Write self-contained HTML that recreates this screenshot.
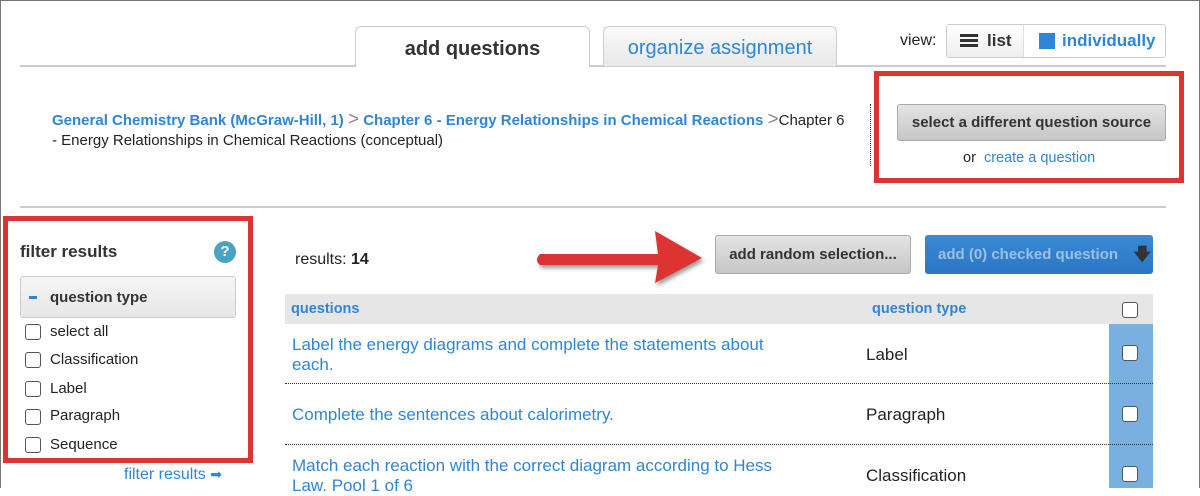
<!DOCTYPE html>
<html><head><style>
*{box-sizing:border-box;margin:0;padding:0}
body{width:1200px;height:488px;overflow:hidden;background:#fff;font-family:"Liberation Sans",sans-serif;position:relative;color:#222}
.a{position:absolute}
.blue{color:#2f86d6}
.cb{position:absolute;width:16px;height:16px;border:1.5px solid #555;border-radius:3px;background:#fff}
.btn{position:absolute;border:1px solid #aaa;border-radius:3px;background:linear-gradient(#e4e4e4,#c6c6c6);font-weight:bold;font-size:15px;color:#333;text-align:center}
</style></head><body>
<div class="a" style="left:0;top:0;width:1200px;height:488px;border:1.5px solid #777;border-bottom:none"></div>
<div class="a" style="left:20px;top:65px;width:1146px;height:2px;background:#ccc"></div>
<div class="a" style="left:355px;top:26px;width:235px;height:41px;border:1px solid #ccc;border-bottom:none;border-radius:6px 6px 0 0;background:#fff;font-size:20px;font-weight:bold;text-align:center;line-height:44px;color:#333">add questions</div>
<div class="a blue" style="left:603px;top:26px;width:234px;height:40px;border:1px solid #ccc;border-bottom:none;border-radius:6px 6px 0 0;background:linear-gradient(#fafafa,#e8e8e8);font-size:20px;text-align:center;line-height:42px">organize assignment</div>
<div class="a" style="left:900px;top:32px;font-size:16px">view:</div>
<div class="a" style="left:946px;top:24px;width:220px;height:34px;border:1px solid #ccc;border-radius:3px;background:#fff"></div>
<div class="a" style="left:947px;top:25px;width:77px;height:32px;background:linear-gradient(#fff,#eee);border-right:1px solid #ddd"></div>
<div class="a" style="left:960px;top:34px;width:18px;height:3px;background:#333;box-shadow:0 5px 0 #333,0 10px 0 #333"></div>
<div class="a" style="left:987px;top:31px;font-size:17px;font-weight:bold;color:#333">list</div>
<div class="a" style="left:1039px;top:33px;width:16px;height:16px;background:#2f86d6"></div>
<div class="a blue" style="left:1062px;top:31px;font-size:17px;font-weight:bold">individually</div>
<div class="a" style="left:52px;top:110px;font-size:15px;line-height:20px;width:830px"><span class="blue" style="font-weight:bold">General Chemistry Bank (McGraw-Hill, 1)</span> <span style="color:#888;font-size:19px">&gt;</span> <span class="blue" style="font-weight:bold">Chapter 6 - Energy Relationships in Chemical Reactions</span> <span style="color:#888;font-size:19px">&gt;</span>Chapter 6<br>- Energy Relationships in Chemical Reactions (conceptual)</div>
<div class="a" style="left:870px;top:104px;height:62px;border-left:1px dotted #333"></div>
<div class="a" style="left:874px;top:71px;width:310px;height:112px;border:5px solid #d33"></div>
<div class="btn" style="left:897px;top:104px;width:269px;height:37px;line-height:36px">select a different question source</div>
<div class="a" style="left:963px;top:150px;font-size:14.5px">or <span class="blue">&nbsp;create a question</span></div>
<div class="a" style="left:20px;top:206px;width:1146px;height:2px;background:#ccc"></div>
<div class="a" style="left:3px;top:216px;width:250px;height:247px;border:5px solid #d33"></div>
<div class="a" style="left:20px;top:242px;font-size:17px;font-weight:bold;color:#333">filter results</div>
<div class="a" style="left:214px;top:241px;width:22px;height:22px;border-radius:50%;background:#4aa3c4;color:#fff;font-weight:bold;font-size:15px;text-align:center;line-height:22px">?</div>
<div class="a" style="left:20px;top:276px;width:216px;height:42px;border:1px solid #ccc;border-radius:3px;background:linear-gradient(#f6f6f6,#e6e6e6)"></div>
<div class="a" style="left:29px;top:296px;width:8px;height:3px;background:#2f86d6"></div>
<div class="a" style="left:50px;top:289px;font-size:15px;font-weight:bold;color:#333">question type</div>
<div class="cb" style="left:25px;top:324px"></div><div class="a" style="left:50px;top:323px;font-size:15px">select all</div>
<div class="cb" style="left:25px;top:352px"></div><div class="a" style="left:50px;top:351px;font-size:15px">Classification</div>
<div class="cb" style="left:25px;top:381px"></div><div class="a" style="left:50px;top:380px;font-size:15px">Label</div>
<div class="cb" style="left:25px;top:409px"></div><div class="a" style="left:50px;top:407px;font-size:15px">Paragraph</div>
<div class="cb" style="left:25px;top:437px"></div><div class="a" style="left:50px;top:436px;font-size:15px">Sequence</div>
<div class="a blue" style="left:124px;top:466px;font-size:16px">filter results <span style="font-size:14px">&#10145;</span></div>
<div class="a" style="left:295px;top:251px;font-size:16px">results: <b>14</b></div>
<svg class="a" style="left:530px;top:225px" width="180" height="64"><path d="M10 29 L128 29 L125 6 L172 33 L125 58 L128 40 L10 40 Q4 35 10 29Z" fill="#d33" style="filter:drop-shadow(2px 3px 2px rgba(0,0,0,.4))"/></svg>
<div class="btn" style="left:715px;top:235px;width:196px;height:39px;line-height:38px">add random selection...</div>
<div class="a" style="left:925px;top:235px;width:228px;height:39px;border-radius:3px;background:linear-gradient(#3a8ad6,#2b76c4);color:#9cc0e4;font-weight:bold;font-size:15px;line-height:39px;padding-left:13px">add (0) checked question <span style="color:#333;position:absolute;right:2px;font-size:17px">&#129095;</span></div>
<div class="a" style="left:285px;top:294px;width:868px;height:30px;background:#e6e6e6"></div>
<div class="a blue" style="left:291px;top:301px;font-size:14.5px;font-weight:bold">questions</div>
<div class="a blue" style="left:872px;top:301px;font-size:14.5px;font-weight:bold">question type</div>
<div class="cb" style="left:1122px;top:302px"></div>
<div class="a" style="left:1109px;top:324px;width:44px;height:164px;background:#7ab0e0"></div>
<div class="a blue" style="left:292px;top:335px;font-size:17px;line-height:20px;width:500px">Label the energy diagrams and complete the statements about each.</div>
<div class="a" style="left:866px;top:345px;font-size:17px">Label</div>
<div class="cb" style="left:1122px;top:345px"></div>
<div class="a" style="left:285px;top:383px;width:868px;border-top:1px dotted #333"></div>
<div class="a blue" style="left:292px;top:405px;font-size:17px">Complete the sentences about calorimetry.</div>
<div class="a" style="left:866px;top:405px;font-size:17px">Paragraph</div>
<div class="cb" style="left:1122px;top:406px"></div>
<div class="a" style="left:285px;top:444px;width:868px;border-top:1px dotted #333"></div>
<div class="a blue" style="left:292px;top:456px;font-size:17px;line-height:20px;width:510px">Match each reaction with the correct diagram according to Hess Law. Pool 1 of 6</div>
<div class="a" style="left:866px;top:466px;font-size:17px">Classification</div>
<div class="cb" style="left:1122px;top:466px"></div>
</body></html>
